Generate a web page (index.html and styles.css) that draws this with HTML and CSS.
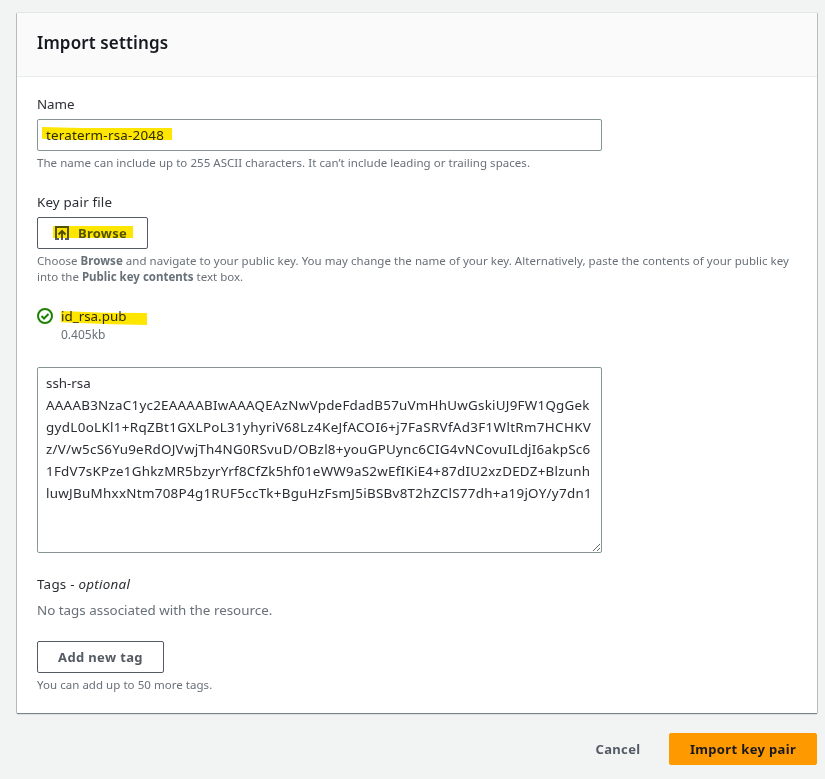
FILE: index.html
```html
<!DOCTYPE html>
<html lang="en">
<head>
    <meta charset="UTF-8">
    <meta name="viewport" content="width=device-width, initial-scale=1.0">
    <title>Import key pair</title>
    <link rel="stylesheet" href="styles.css">
</head>
<body>

<div class="card">
    <div class="card-header">
        <h2>Import settings</h2>
    </div>
    <div class="card-body">
        <label class="label label-name">Name</label>
        <div class="input"><span class="marked mark-name">teraterm-rsa-2048</span></div>
        <p class="hint">The name can include up to 255 ASCII characters. It can’t include leading or trailing spaces.</p>

        <label class="label label-file">Key pair file</label>
        <button class="btn btn-browse">
            <span class="marked mark-browse">
                <svg class="upload-icon" width="16" height="16" viewBox="0 0 16 16">
                    <path d="M5 14H2V2h12v12h-3M8 15V6M4.500 9.500 8 6l3.500 3.500" fill="none" stroke="currentColor" stroke-width="2"/>
                </svg>
                <span>Browse</span>
            </span>
        </button>
        <p class="hint">Choose <b>Browse</b> and navigate to your public key. You may change the name of your key. Alternatively, paste the contents of your public key<br><span class="hint-end">into the <b>Public key contents</b> text box.</span></p>

        <div class="file">
            <svg class="check-icon" width="16" height="16" viewBox="0 0 16 16">
                <circle cx="8" cy="8" r="7" fill="none" stroke="#1d8102" stroke-width="2"/>
                <path d="M4.500 8 7 10.500 11.500 6" fill="none" stroke="#1d8102" stroke-width="2"/>
            </svg>
            <div>
                <div class="file-name"><span class="marked mark-file">id_rsa.pub</span></div>
                <div class="file-size">0.405kb</div>
            </div>
        </div>

        <div class="key-contents">
            <div class="key-type">ssh-rsa</div>
            <div class="key-first">AAAAB3NzaC1yc2EAAAABIwAAAQEAzNwVpdeFdadB57uVmHhUwGskiUJ9FW1QgGek</div>
            <div class="key-wide">gydL0oLKl1+RqZBt1GXLPoL31yhyriV68Lz4KeJfACOI6+j7FaSRVfAd3F1WltRm7HCHKV</div>
            <div>z/V/w5cS6Yu9eRdOJVwjTh4NG0RSvuD/OBzl8+youGPUync6CIG4vNCovuILdjI6akpSc6</div>
            <div>1FdV7sKPze1GhkzMR5bzyrYrf8CfZk5hf01eWW9aS2wEfIKiE4+87dIU2xzDEDZ+Blzunh</div>
            <div class="key-last">luwJBuMhxxNtm708P4g1RUF5ccTk+BguHzFsmJ5iBSBv8T2hZClS77dh+a19jOY/y7dn1</div>
        </div>

        <label class="label label-tags">Tags - <i>optional</i></label>
        <p class="no-tags">No tags associated with the resource.</p>
        <button class="btn btn-tag">Add new tag</button>
        <p class="hint">You can add up to 50 more tags.</p>
    </div>
</div>

<div class="actions">
    <button class="btn btn-link">Cancel</button>
    <button class="btn btn-primary">Import key pair</button>
</div>

</body>
</html>
```
FILE: styles.css
```css
* {
    box-sizing: border-box;
}
body {
    margin: 0;
    padding: 13px 8px 0 17px;
    height: 779px;
    overflow: hidden;
    background: #f2f3f3;
    font-family: "Noto Sans", "Open Sans", sans-serif;
    font-size: 13.4px;
    line-height: 22px;
    color: #2b2e34;
    white-space: nowrap;
}
h2, p {
    margin: 0;
}
.card {
    height: 700px;
    background: #fff;
    box-shadow: 0 1px 1px 0 rgba(0, 28, 36, 0.5), -1px 0 0 0 #c5cccd, 1px 0 0 0 #c5cccd, 0 -1px 0 0 #e2e6e6;
}
.card-header {
    height: 64px;
    padding: 19px 20px;
    background: #fafafa;
    border-bottom: 1px solid #eaeded;
}
h2 {
    color: #16191f;
    font-size: 17px;
    font-weight: 600;
    line-height: 22px;
    letter-spacing: 0.13px;
}
.card-body {
    padding: 16px 20px;
}
.label {
    display: block;
    height: 26px;
    letter-spacing: 0.15px;
}
.label-name {
    letter-spacing: -0.1px;
}
.label-file {
    margin-top: 20px;
}
.input {
    width: 565px;
    height: 32px;
    padding: 4px 8px;
    border: 1px solid #879596;
    border-radius: 2px;
    letter-spacing: 0.22px;
}
.hint {
    padding-top: 4px;
    font-size: 11.5px;
    line-height: 16px;
    letter-spacing: 0.04px;
    color: #687078;
}
.hint-end {
    letter-spacing: 0;
}
.btn {
    display: flex;
    align-items: center;
    justify-content: center;
    height: 32px;
    padding: 0;
    border: 1px solid #545b64;
    border-radius: 2px;
    background: #fff;
    color: #545b64;
    font-family: inherit;
    font-size: 13px;
    font-weight: 700;
    line-height: 22px;
    letter-spacing: 0.35px;
    cursor: pointer;
}
.btn-browse {
    justify-content: flex-start;
    width: 111px;
    padding-left: 16px;
    letter-spacing: 0.25px;
}
.btn-tag {
    width: 127px;
}
.upload-icon {
    margin-right: 8px;
}
.btn-browse .marked {
    display: flex;
    align-items: center;
}

/* highlighter strokes */
.marked {
    position: relative;
}
.marked::after {
    content: "";
    position: absolute;
    background: #ffe600;
    mix-blend-mode: multiply;
}
.mark-name::after {
    left: -4px;
    top: 1px;
    width: 130px;
    height: 13px;
    clip-path: polygon(0 0, 30% 8%, 100% 8%, 100% 100%, 20% 100%, 0 90%);
}
.mark-browse::after {
    left: -1px;
    top: 4px;
    width: 80px;
    height: 12px;
}
.mark-file::after {
    left: 0;
    top: 4px;
    width: 86px;
    height: 14px;
    clip-path: polygon(0 0, 50% 12%, 100% 15%, 100% 100%, 60% 94%, 0 80%);
}

.file {
    display: flex;
    gap: 8px;
    margin-top: 20px;
}
.check-icon {
    margin-top: 3px;
}
.file-size {
    font-size: 12px;
    line-height: 16px;
    color: #687078;
}
.key-contents {
    width: 565px;
    height: 186px;
    margin-top: 24px;
    padding: 4px 8px;
    overflow: hidden;
    resize: both;
    border: 1px solid #879596;
    border-radius: 2px;
    letter-spacing: 0.255px;
}
.key-type {
    letter-spacing: -0.02px;
}
.key-first {
    letter-spacing: 0.245px;
}
.key-wide {
    letter-spacing: 0.335px;
}
.key-last {
    letter-spacing: 0.285px;
}
.label-tags {
    margin-top: 20px;
    letter-spacing: 0.25px;
}
.no-tags {
    color: #687078;
    letter-spacing: 0;
    margin-bottom: 20px;
}
.actions {
    display: flex;
    justify-content: flex-end;
    padding-top: 20px;
}
.btn-link {
    width: 86px;
    margin-right: 8px;
    border-color: transparent;
    background: transparent;
}
.btn-primary {
    width: 148px;
    border-color: #ff9900;
    background: #ff9900;
    color: #16191f;
}
```
